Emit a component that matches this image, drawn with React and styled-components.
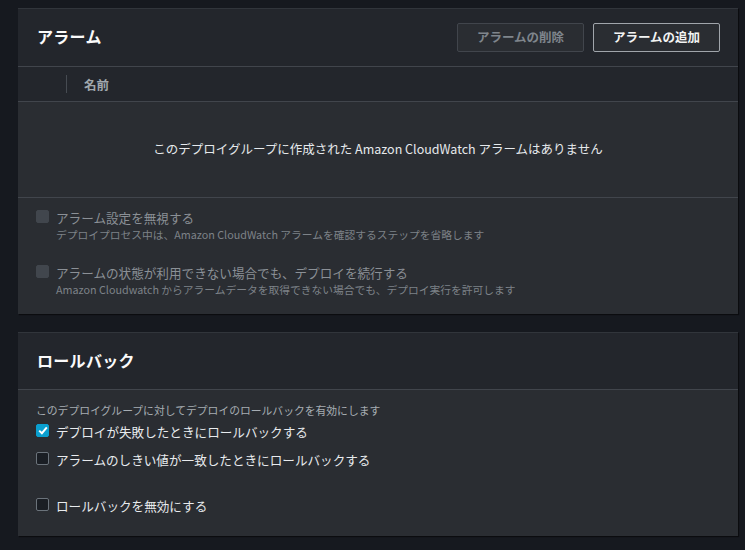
import React from 'react';
import styled, { createGlobalStyle } from 'styled-components';

const GlobalStyle = createGlobalStyle`
  html, body {
    margin: 0;
    padding: 0;
    background: #16191f;
  }
  body {
    font-family: 'Noto Sans CJK JP', 'Noto Sans', sans-serif;
    color: #d5dbdb;
  }
`;

const Page = styled.div`
  display: flex;
  flex-direction: column;
  gap: 18px;
  padding: 8px 7px 15px 18px;
  width: 745px;
  box-sizing: border-box;
`;

const Card = styled.section`
  background: #2a2d32;
  box-shadow: 1px 1px 1px rgba(0, 0, 0, 0.5);
  border-top: 1px solid #31353b;
`;

const CardHeader = styled.header`
  display: flex;
  align-items: center;
  justify-content: space-between;
  height: ${p => p.$h || 57}px;
  padding: 0 18px 0 19px;
  background: #23262c;
  border-bottom: 1px solid #41454c;
`;

const Title = styled.h2`
  margin: 0 0 3px 0;
  font-size: 16px;
  font-weight: 700;
  color: #fafafa;
  letter-spacing: 0.3px;
`;

const Actions = styled.div`
  display: flex;
  gap: 9px;
`;

const Button = styled.button`
  width: 127px;
  height: 29px;
  box-sizing: border-box;
  background: #2a2d32;
  border: 1px solid ${p => (p.disabled ? '#41454c' : '#a0a5ab')};
  border-radius: 2px;
  color: ${p => (p.disabled ? '#7f858c' : '#f2f3f3')};
  font-family: inherit;
  font-size: 12.5px;
  font-weight: 700;
  padding: 0 0 2px 0;
`;

const TableHead = styled.div`
  display: flex;
  align-items: center;
  height: 34px;
  background: #23262c;
  border-bottom: 1px solid #41454c;
  padding-left: 48px;
`;

const ColDivider = styled.span`
  width: 1px;
  height: 18px;
  background: #464b52;
  margin-right: 17px;
`;

const ColLabel = styled.span`
  font-size: 12.5px;
  font-weight: 700;
  color: #a1a8ae;
`;

const Empty = styled.div`
  height: 96px;
  display: flex;
  align-items: center;
  justify-content: center;
  font-size: 12.5px;
  color: #e6e9ec;
  border-bottom: 1px solid #41454c;
  padding-bottom: 3px;
  box-sizing: border-box;
`;

const Options = styled.div`
  display: flex;
  flex-direction: column;
  gap: ${p => p.$gap}px;
  padding: ${p => p.$pad};
`;

const Option = styled.label`
  display: flex;
  align-items: flex-start;
  gap: 7px;
`;

const Box = styled.span`
  flex: none;
  width: 13px;
  height: 13px;
  margin-top: 1px;
  border-radius: 2px;
  box-sizing: border-box;
  display: flex;
  align-items: center;
  justify-content: center;
  background: ${p => (p.$disabled ? '#41464d' : p.$checked ? '#0a9fcf' : '#1a1e24')};
  border: 1px solid ${p => (p.$disabled ? '#41464d' : p.$checked ? '#0a9fcf' : '#6b737b')};
`;

const OptionText = styled.div`
  display: flex;
  flex-direction: column;
`;

const OptionLabel = styled.span`
  font-size: 12.6px;
  line-height: 17px;
  color: ${p => (p.$disabled ? '#8b9096' : '#e8ebee')};
`;

const OptionHint = styled.span`
  font-size: 10.75px;
  line-height: 17px;
  color: ${p => (p.$disabled ? '#7d8288' : '#9aa0a6')};
`;

const Intro = styled.div`
  font-size: 10.8px;
  color: #a7adb3;
  margin-bottom: 6px;
  line-height: 14px;
`;

const Spacer = styled.div`
  height: 7px;
`;

const Check = () => (
  <svg width="10" height="9" viewBox="0 0 10 9">
    <path d="M1.2 4.6 L3.9 7.2 L8.8 1.4" fill="none" stroke="#fff" strokeWidth="2" />
  </svg>
);

const CheckOption = ({ checked, disabled, label, hint }) => (
  <Option>
    <Box $checked={checked} $disabled={disabled}>{checked && <Check />}</Box>
    <OptionText>
      <OptionLabel $disabled={disabled}>{label}</OptionLabel>
      {hint && <OptionHint $disabled={disabled}>{hint}</OptionHint>}
    </OptionText>
  </Option>
);

const App = () => (
  <>
    <GlobalStyle />
    <Page>
      <Card>
        <CardHeader>
          <Title>アラーム</Title>
          <Actions>
            <Button disabled>アラームの削除</Button>
            <Button>アラームの追加</Button>
          </Actions>
        </CardHeader>
        <TableHead>
          <ColDivider />
          <ColLabel>名前</ColLabel>
        </TableHead>
        <Empty>このデプロイグループに作成された Amazon CloudWatch アラームはありません</Empty>
        <Options $gap={21} $pad="11px 18px 16px 18px">
          <CheckOption
            disabled
            label="アラーム設定を無視する"
            hint="デプロイプロセス中は、Amazon CloudWatch アラームを確認するステップを省略します"
          />
          <CheckOption
            disabled
            label="アラームの状態が利用できない場合でも、デプロイを続行する"
            hint="Amazon Cloudwatch からアラームデータを取得できない場合でも、デプロイ実行を許可します"
          />
        </Options>
      </Card>
      <Card>
        <CardHeader $h={56}>
          <Title>ロールバック</Title>
        </CardHeader>
        <Options $gap={11} $pad="13px 18px 22px 18px">
          <div>
            <Intro>このデプロイグループに対してデプロイのロールバックを有効にします</Intro>
            <CheckOption checked label="デプロイが失敗したときにロールバックする" />
          </div>
          <CheckOption label="アラームのしきい値が一致したときにロールバックする" />
          <Spacer />
          <CheckOption label="ロールバックを無効にする" />
        </Options>
      </Card>
    </Page>
  </>
);

export default App;
